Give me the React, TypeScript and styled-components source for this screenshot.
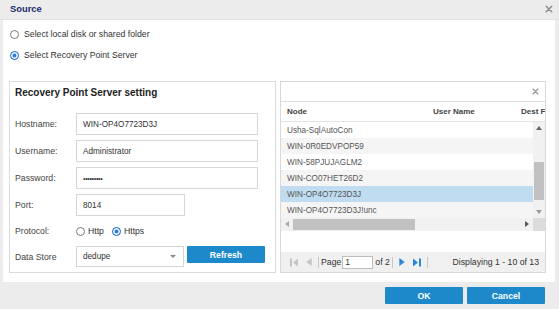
import React from 'react'
import styled, { createGlobalStyle } from 'styled-components'

const GlobalStyle = createGlobalStyle`
  html, body {
    margin: 0;
    padding: 0;
  }
  body {
    font-family: 'Liberation Sans', Arial, sans-serif;
    background: #ececec;
    color: #333;
  }
`

const BLUE = '#1d89cb'

const S = {
  Dialog: styled.div`
    width: 559px;
    height: 309px;
    display: flex;
    flex-direction: column;
    background: #ececec;
    overflow: hidden;
  `,
  TitleBar: styled.div`
    height: 20px;
    flex: none;
    box-sizing: border-box;
    display: flex;
    align-items: center;
    justify-content: space-between;
    padding: 0 6px 2px 10px;
    border-bottom: 1px solid #e2e2e2;
  `,
  Title: styled.span`
    font-size: 9.4px;
    font-weight: bold;
    color: #1c2b6e;
  `,
  Body: styled.div`
    flex: 1;
    margin: 0 4px 0 3px;
    background: #fff;
    padding: 7px 6px 0 6px;
    display: flex;
    flex-direction: column;
  `,
  Options: styled.div`
    display: flex;
    flex-direction: column;
    gap: 7px;
    padding-left: 1px;
  `,
  Option: styled.label<{ $gap?: number }>`
    display: flex;
    align-items: center;
    gap: ${({ $gap }) => $gap ?? 5}px;
    height: 14px;
    font-size: 8.7px;
    color: #333;
  `,
  Radio: styled.span<{ $checked?: boolean }>`
    width: 9px;
    height: 9px;
    box-sizing: border-box;
    border-radius: 50%;
    flex: none;
    border: 1px solid ${({ $checked }) => ($checked ? '#2d7be0' : '#7a7a7a')};
    background: ${({ $checked }) => ($checked ? '#2d7be0' : '#fff')};
    box-shadow: ${({ $checked }) => ($checked ? 'inset 0 0 0 1.5px #fff' : 'none')};
  `,
  Panels: styled.div`
    display: flex;
    gap: 4px;
    margin-top: 19px;
    height: 192px;
  `,
  SettingsPanel: styled.div`
    width: 267px;
    box-sizing: border-box;
    border: 1px solid #dcdcdc;
    padding: 0 5px;
    display: flex;
    flex-direction: column;
  `,
  PanelTitle: styled.div`
    height: 21px;
    line-height: 21px;
    font-size: 10px;
    font-weight: bold;
    color: #222;
  `,
  Form: styled.div`
    margin-top: 10px;
    display: grid;
    grid-template-columns: 61px auto;
    grid-template-rows: 22px 22px 22px 22px 20px 22px;
    row-gap: 5px;
    align-items: center;
  `,
  FieldLabel: styled.span`
    font-size: 8.7px;
    color: #444;
  `,
  Field: styled.div`
    display: flex;
    align-items: flex-start;
    height: 100%;
  `,
  Input: styled.input<{ $width: number }>`
    width: ${({ $width }) => $width}px;
    height: 22px;
    box-sizing: border-box;
    border: 1px solid #d6d6d6;
    padding: 0 6px;
    font-family: 'Liberation Sans', Arial, sans-serif;
    font-size: 8.2px;
    color: #333;
    outline: none;
    background: #fff;
  `,
  PasswordDots: styled.span`
    font-size: 7px;
    letter-spacing: -0.3px;
  `,
  PasswordBox: styled.div`
    width: 182px;
    height: 22px;
    box-sizing: border-box;
    border: 1px solid #d6d6d6;
    padding: 0 6px;
    display: flex;
    align-items: center;
    color: #333;
  `,
  ProtocolGroup: styled.div`
    display: flex;
    align-items: center;
    gap: 8px;
  `,
  Select: styled.div`
    width: 108px;
    height: 21px;
    box-sizing: border-box;
    border: 1px solid #d6d6d6;
    padding: 0 6px;
    display: flex;
    align-items: center;
    justify-content: space-between;
    font-size: 8.2px;
    color: #333;
  `,
  Caret: styled.span`
    width: 0;
    height: 0;
    border-left: 3px solid transparent;
    border-right: 3px solid transparent;
    border-top: 3px solid #888;
    margin-right: 1px;
  `,
  Button: styled.button`
    width: 78px;
    height: 17px;
    border: none;
    border-radius: 1px;
    background: ${BLUE};
    color: #fff;
    font-family: 'Liberation Sans', Arial, sans-serif;
    font-size: 8.7px;
    font-weight: bold;
    padding: 0;
    cursor: pointer;
  `,
  RefreshButton: styled.button`
    margin-left: 3px;
    width: 78px;
    height: 17px;
    border: none;
    border-radius: 1px;
    background: ${BLUE};
    color: #fff;
    font-family: 'Liberation Sans', Arial, sans-serif;
    font-size: 8.7px;
    font-weight: bold;
    padding: 0;
  `,
  GridPanel: styled.div`
    width: 266px;
    box-sizing: border-box;
    border: 1px solid #d8d8d8;
    display: flex;
    flex-direction: column;
    overflow: hidden;
  `,
  Toolbar: styled.div`
    height: 20px;
    flex: none;
    box-sizing: border-box;
    border-bottom: 1px solid #dedede;
    display: flex;
    align-items: center;
    justify-content: flex-end;
    padding-right: 6px;
  `,
  HeaderRow: styled.div`
    height: 20px;
    flex: none;
    box-sizing: border-box;
    border-bottom: 1px solid #e4e4e4;
    display: flex;
    align-items: center;
    background: #fff;
    white-space: nowrap;
  `,
  HeaderCell: styled.div<{ $width?: number }>`
    ${({ $width }) => ($width ? `width: ${$width}px; flex: none;` : 'flex: 1; min-width: 0;')}
    box-sizing: border-box;
    padding-left: 6px;
    font-size: 8px;
    font-weight: bold;
    color: #444;
    overflow: hidden;
  `,
  GridBody: styled.div`
    display: flex;
    height: 96px;
    flex: none;
  `,
  Rows: styled.div`
    flex: 1;
    display: flex;
    flex-direction: column;
  `,
  Row: styled.div<{ $alt?: boolean; $selected?: boolean }>`
    height: 16px;
    display: flex;
    align-items: center;
    padding-left: 6px;
    font-size: 8.2px;
    color: #555;
    background: ${({ $alt, $selected }) => ($selected ? '#bfdcf0' : $alt ? '#f5f5f5' : '#fff')};
  `,
  VScroll: styled.div`
    width: 12px;
    flex: none;
    background: #f1f1f1;
    display: flex;
    flex-direction: column;
    align-items: center;
  `,
  VThumb: styled.div`
    width: 10px;
    height: 38px;
    background: #c1c1c1;
    margin-top: 28px;
    margin-bottom: auto;
  `,
  ArrowBox: styled.div`
    height: 12px;
    width: 12px;
    display: flex;
    align-items: center;
    justify-content: center;
    flex: none;
  `,
  HScroll: styled.div`
    height: 13px;
    flex: none;
    display: flex;
    background: #f1f1f1;
  `,
  HTrack: styled.div`
    flex: 1;
    display: flex;
    align-items: center;
  `,
  HThumb: styled.div`
    width: 122px;
    height: 11px;
    background: #c1c1c1;
  `,
  Corner: styled.div`
    width: 12px;
    flex: none;
    background: #dcdcdc;
  `,
  Spacer: styled.div`
    flex: 1;
    background: #fff;
  `,
  Pager: styled.div`
    height: 20px;
    flex: none;
    background: #f0f0f0;
    display: flex;
    align-items: center;
    padding: 0 6px 0 5px;
    font-size: 8.7px;
    color: #333;
  `,
  PagerButton: styled.span`
    display: flex;
    align-items: center;
    margin: 0 4px;
  `,
  Sep: styled.span`
    width: 1px;
    height: 11px;
    background: #c8c8c8;
    margin: 0 2px;
  `,
  PageInput: styled.input`
    width: 31px;
    height: 13px;
    box-sizing: border-box;
    border: 1px solid #bdbdbd;
    padding: 0 2px;
    margin: 0 2px 0 1px;
    font-family: 'Liberation Sans', Arial, sans-serif;
    font-size: 8.5px;
    color: #333;
    outline: none;
  `,
  Displaying: styled.span`
    margin-left: auto;
  `,
  Footer: styled.div`
    height: 27px;
    flex: none;
    display: flex;
    justify-content: flex-end;
    gap: 4px;
    padding: 5px 14px 0 0;
    box-sizing: border-box;
  `,
}

const CloseIcon = ({ size, color }: { size: number; color: string }) => (
  <svg width={size} height={size} viewBox="0 0 10 10">
    <path d="M1.5 1.5 L8.5 8.5 M8.5 1.5 L1.5 8.5" stroke={color} strokeWidth="1.8" strokeLinecap="round" />
  </svg>
)

const Tri = ({ dir, color, size = 5 }: { dir: 'up' | 'down' | 'left' | 'right'; color: string; size?: number }) => {
  const d = {
    up: 'M0 4 L3 0 L6 4 Z',
    down: 'M0 0 L6 0 L3 4 Z',
    left: 'M4 0 L4 6 L0 3 Z',
    right: 'M0 0 L4 3 L0 6 Z',
  }[dir]
  const vertical = dir === 'up' || dir === 'down'
  return (
    <svg
      width={vertical ? size + 1 : size - 1}
      height={vertical ? size - 1 : size + 1}
      viewBox={vertical ? '0 0 6 4' : '0 0 4 6'}
    >
      <path d={d} fill={color} />
    </svg>
  )
}

const FirstIcon = ({ color }: { color: string }) => (
  <svg width="8" height="9" viewBox="0 0 8 9">
    <rect x="0" y="0.5" width="2" height="8" fill={color} />
    <path d="M8 0.5 L8 8.5 L3 4.5 Z" fill={color} />
  </svg>
)

const LastIcon = ({ color }: { color: string }) => (
  <svg width="8" height="9" viewBox="0 0 8 9">
    <path d="M0 0.5 L5 4.5 L0 8.5 Z" fill={color} />
    <rect x="6" y="0.5" width="2" height="8" fill={color} />
  </svg>
)

const nodes = [
  'Usha-SqlAutoCon',
  'WIN-0R0EDVPOP59',
  'WIN-58PJUJAGLM2',
  'WIN-CO07HET26D2',
  'WIN-OP4O7723D3J',
  'WIN-OP4O7723D3J!unc',
]

export default function App() {
  return (
    <>
      <GlobalStyle />
      <S.Dialog>
        <S.TitleBar>
          <S.Title>Source</S.Title>
          <CloseIcon size={8} color="#8a8a8a" />
        </S.TitleBar>
        <S.Body>
          <S.Options>
            <S.Option>
              <S.Radio />
              Select local disk or shared folder
            </S.Option>
            <S.Option>
              <S.Radio $checked />
              Select Recovery Point Server
            </S.Option>
          </S.Options>
          <S.Panels>
            <S.SettingsPanel>
              <S.PanelTitle>Recovery Point Server setting</S.PanelTitle>
              <S.Form>
                <S.FieldLabel>Hostname:</S.FieldLabel>
                <S.Field>
                  <S.Input $width={182} readOnly defaultValue="WIN-OP4O7723D3J" />
                </S.Field>
                <S.FieldLabel>Username:</S.FieldLabel>
                <S.Field>
                  <S.Input $width={182} readOnly defaultValue="Administrator" />
                </S.Field>
                <S.FieldLabel>Password:</S.FieldLabel>
                <S.Field>
                  <S.PasswordBox>
                    <S.PasswordDots>•••••••••</S.PasswordDots>
                  </S.PasswordBox>
                </S.Field>
                <S.FieldLabel>Port:</S.FieldLabel>
                <S.Field>
                  <S.Input $width={109} readOnly defaultValue="8014" />
                </S.Field>
                <S.FieldLabel>Protocol:</S.FieldLabel>
                <S.ProtocolGroup>
                  <S.Option $gap={3}>
                    <S.Radio />
                    Http
                  </S.Option>
                  <S.Option $gap={3}>
                    <S.Radio $checked />
                    Https
                  </S.Option>
                </S.ProtocolGroup>
                <S.FieldLabel>Data Store</S.FieldLabel>
                <S.Field>
                  <S.Select>
                    dedupe
                    <S.Caret />
                  </S.Select>
                  <S.RefreshButton>Refresh</S.RefreshButton>
                </S.Field>
              </S.Form>
            </S.SettingsPanel>
            <S.GridPanel>
              <S.Toolbar>
                <CloseIcon size={7} color="#999" />
              </S.Toolbar>
              <S.HeaderRow>
                <S.HeaderCell $width={146}>Node</S.HeaderCell>
                <S.HeaderCell $width={88}>User Name</S.HeaderCell>
                <S.HeaderCell>Dest F</S.HeaderCell>
              </S.HeaderRow>
              <S.GridBody>
                <S.Rows>
                  {nodes.map((n, i) => (
                    <S.Row key={n} $alt={i % 2 === 1} $selected={i === 4}>
                      {n}
                    </S.Row>
                  ))}
                </S.Rows>
                <S.VScroll>
                  <S.ArrowBox>
                    <Tri dir="up" color="#666" />
                  </S.ArrowBox>
                  <S.VThumb />
                  <S.ArrowBox>
                    <Tri dir="down" color="#999" />
                  </S.ArrowBox>
                </S.VScroll>
              </S.GridBody>
              <S.HScroll>
                <S.ArrowBox>
                  <Tri dir="left" color="#aaa" />
                </S.ArrowBox>
                <S.HTrack>
                  <S.HThumb />
                </S.HTrack>
                <S.ArrowBox>
                  <Tri dir="right" color="#555" />
                </S.ArrowBox>
                <S.Corner />
              </S.HScroll>
              <S.Spacer />
              <S.Pager>
                <S.PagerButton>
                  <FirstIcon color="#c4c4c4" />
                </S.PagerButton>
                <S.PagerButton>
                  <Tri dir="left" color="#c4c4c4" size={7} />
                </S.PagerButton>
                <S.Sep />
                <span>Page</span>
                <S.PageInput readOnly defaultValue="1" />
                <span>of 2</span>
                <S.Sep />
                <S.PagerButton>
                  <Tri dir="right" color="#2c86d8" size={7} />
                </S.PagerButton>
                <S.PagerButton>
                  <LastIcon color="#2c86d8" />
                </S.PagerButton>
                <S.Sep />
                <S.Displaying>Displaying 1 - 10 of 13</S.Displaying>
              </S.Pager>
            </S.GridPanel>
          </S.Panels>
        </S.Body>
        <S.Footer>
          <S.Button>OK</S.Button>
          <S.Button>Cancel</S.Button>
        </S.Footer>
      </S.Dialog>
    </>
  )
}
